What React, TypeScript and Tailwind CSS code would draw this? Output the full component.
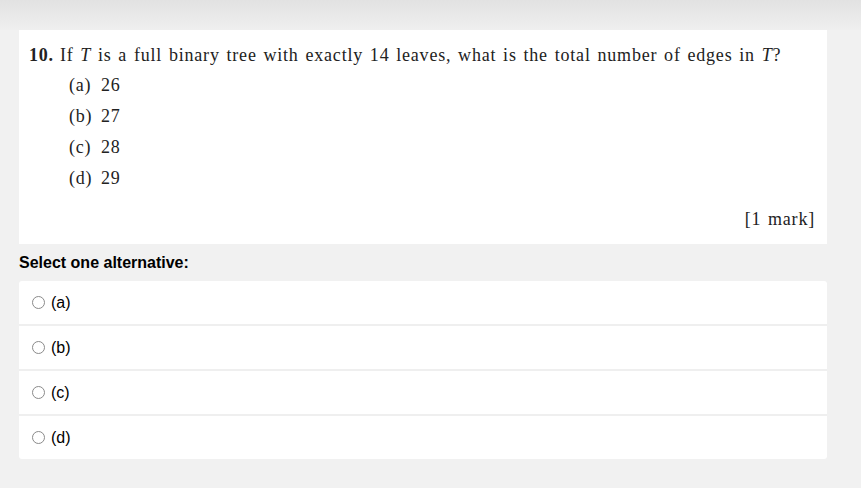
import React from "react";

const choices = [
  { key: "a", value: "26" },
  { key: "b", value: "27" },
  { key: "c", value: "28" },
  { key: "d", value: "29" },
];

export default function App() {
  return (
    <div className="w-[861px] h-[488px] bg-[#f1f1f1] overflow-hidden">
      <div className="h-[30px] bg-gradient-to-b from-[#e2e2e2] to-[#efefef]" />

      <div className="pl-[19px] w-[827px]">
        {/* question text */}
        <div className="bg-white h-[214px] pl-[10px] pr-[12px] pt-[8px] text-[#222] font-['Liberation_Serif',serif] text-[18px] tracking-[0.8px] [word-spacing:1.5px] relative">
          <p className="leading-[34px]">
            <span className="font-bold">10.</span>
            <span className="ml-[6px]">If</span> <i>T</i> is a full binary tree with exactly 14 leaves, what is the total number of edges in <i>T</i>?
          </p>
          <ul className="pl-[40px] mt-[-2px]">
            {choices.map((c) => (
              <li key={c.key} className="flex h-[31px] items-center">
                <span className="w-[32px]">({c.key})</span>
                <span>{c.value}</span>
              </li>
            ))}
          </ul>
          <div className="absolute right-[12px] top-[176px] leading-[26px]">[1 mark]</div>
        </div>

        <p className="h-[37px] flex items-center font-['Liberation_Sans',Arial,sans-serif] font-bold text-[16px] text-black">
          Select one alternative:
        </p>

        {/* answers */}
        <div className="bg-white rounded-[3px] font-['Liberation_Sans',Arial,sans-serif] text-[16px] text-black">
          {choices.map((c, i) => (
            <label
              key={c.key}
              className={`flex items-center pl-[13px] gap-[6px] ${i > 0 ? "h-[45px] border-t-2 border-[#efefef]" : "h-[43px]"}`}
            >
              <span className="shrink-0 w-[13px] h-[13px] rounded-full border-[1.5px] border-[#8a8a8a] bg-white" />
              <span>({c.key})</span>
            </label>
          ))}
        </div>
      </div>
    </div>
  );
}
